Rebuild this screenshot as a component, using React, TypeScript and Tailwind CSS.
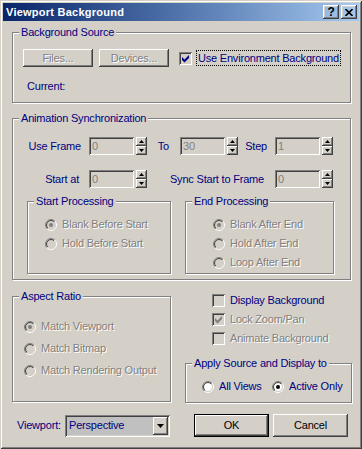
import type { ReactNode } from "react";

const raised =
  "shadow-[inset_-1px_-1px_0_#404040,inset_1px_1px_0_#fff,inset_-2px_-2px_0_#808080,inset_2px_2px_0_#d4d0c8]";
const sunken =
  "shadow-[inset_1px_1px_0_#808080,inset_-1px_-1px_0_#fff,inset_2px_2px_0_#404040,inset_-2px_-2px_0_#d4d0c8]";
const etched = "border border-[#808080] shadow-[inset_1px_1px_0_#fff,1px_1px_0_#fff]";
const grey = "text-[#808080] [text-shadow:1px_1px_0_#fff]";
const navy = "text-[#000080]";

const Group = ({ title, className, children }: { title: string; className: string; children?: ReactNode }) => (
  <div className={`relative ${etched} ${className}`}>
    <span className={`absolute top-[-7px] left-[6px] px-[2px] bg-[#d4d0c8] whitespace-nowrap ${navy}`}>{title}</span>
    {children}
  </div>
);

const RadioDot = ({ on, disabled }: { on?: boolean; disabled?: boolean }) => (
  <svg width="12" height="12" viewBox="0 0 12 12" className="shrink-0">
    <defs>
      <linearGradient id="rgOut" x1="0" y1="0" x2="1" y2="1">
        <stop offset="0.5" stopColor="#808080" />
        <stop offset="0.5" stopColor="#ffffff" />
      </linearGradient>
      <linearGradient id="rgIn" x1="0" y1="0" x2="1" y2="1">
        <stop offset="0.5" stopColor="#404040" />
        <stop offset="0.5" stopColor="#d4d0c8" />
      </linearGradient>
    </defs>
    <circle cx="6" cy="6" r="4" fill={disabled ? "#d4d0c8" : "#ffffff"} />
    <circle cx="6" cy="6" r="5.5" fill="none" stroke="url(#rgOut)" strokeWidth="1" />
    <circle cx="6" cy="6" r="4.5" fill="none" stroke="url(#rgIn)" strokeWidth="1" />
    {on && <circle cx="6" cy="6" r="2" fill={disabled ? "#808080" : "#000000"} />}
  </svg>
);

const Radio = ({ label, on, disabled }: { label: string; on?: boolean; disabled?: boolean }) => (
  <div className="flex items-center h-[13px]">
    <RadioDot on={on} disabled={disabled} />
    <span className={`ml-[5px] whitespace-nowrap ${disabled ? grey : navy}`}>{label}</span>
  </div>
);

const CheckBox = ({ on, disabled }: { on?: boolean; disabled?: boolean }) => (
  <div className={`w-[13px] h-[13px] shrink-0 bg-[#d4d0c8] ${sunken}`}>
    {on && (
      <svg width="13" height="13" viewBox="0 0 13 13">
        <path d="M3 5 L5.5 7.5 L10 3 L10 6 L5.5 10.5 L3 8 Z" fill={disabled ? "#808080" : "#000080"} />
      </svg>
    )}
  </div>
);

const Spinner = ({ value }: { value: string }) => (
  <div className="flex items-center">
    <div className={`w-[45px] h-[18px] pl-[3px] leading-[18px] text-[#808080] ${sunken}`}>{value}</div>
    <div className="ml-[2px] flex flex-col w-[11px] h-[18px]">
      <div className={`h-[9px] flex items-center justify-center bg-[#d4d0c8] ${raised}`}>
        <svg width="5" height="3" viewBox="0 0 5 3">
          <path d="M0 3 L2.5 0 L5 3 Z" fill="#000" />
        </svg>
      </div>
      <div className={`h-[9px] flex items-center justify-center bg-[#d4d0c8] ${raised}`}>
        <svg width="5" height="3" viewBox="0 0 5 3">
          <path d="M0 0 L5 0 L2.5 3 Z" fill="#000" />
        </svg>
      </div>
    </div>
  </div>
);

const Button = ({ label, disabled, main, className }: { label: string; disabled?: boolean; main?: boolean; className: string }) => (
  <div className={`flex items-center justify-center ${main ? "border border-black" : ""} ${className}`}>
    <div className={`w-full h-full flex items-center justify-center ${raised} ${disabled ? grey : "text-black"}`}>
      {label}
    </div>
  </div>
);

export default function App() {
  return (
    <div
      className={`w-[362px] h-[449px] bg-[#d4d0c8] p-[3px] font-['Liberation_Sans',Arial,sans-serif] text-[11px] leading-[13px] tracking-[-0.2px] shadow-[inset_1px_1px_0_#d4d0c8,inset_-1px_-1px_0_#404040,inset_2px_2px_0_#fff,inset_-2px_-2px_0_#808080]`}
    >
      {/* title bar */}
      <div className="h-[18px] flex items-center pl-[3px] pr-[2px] bg-gradient-to-r from-[#0a246a] to-[#a6caf0]">
        <span className="text-white font-bold tracking-[0.25px]">Viewport Background</span>
        <div className={`ml-auto w-[16px] h-[14px] flex items-center justify-center font-bold text-black text-[12px] ${raised}`}>
          ?
        </div>
        <div className={`ml-[2px] w-[16px] h-[14px] flex items-center justify-center ${raised}`}>
          <svg width="8" height="7" viewBox="0 0 8 7">
            <path d="M0.5 0 L7.5 7 M7.5 0 L0.5 7" stroke="#000" strokeWidth="1.6" />
          </svg>
        </div>
      </div>

      <div className="ml-[9px] flex flex-col">
        <Group title="Background Source" className="mt-[11px] w-[339px] h-[71px]">
          <div className="flex items-center pt-[16px] pl-[10px]">
            <Button label="Files..." disabled className="w-[70px] h-[18px]" />
            <Button label="Devices..." disabled className="ml-[6px] w-[70px] h-[18px]" />
            <div className="ml-[10px]">
              <CheckBox on />
            </div>
            <span className={`ml-[4px] h-[16px] px-[1px] leading-[14px] border border-dotted border-black whitespace-nowrap ${navy}`}>
              Use Environment Background
            </span>
          </div>
          <div className={`mt-[13px] ml-[14px] ${navy}`}>Current:</div>
        </Group>

        <Group title="Animation Synchronization" className="mt-[15px] w-[339px] h-[162px]">
          <div className="flex items-center pt-[18px] h-[36px]">
            <span className={`w-[68px] text-right ${navy}`}>Use Frame</span>
            <div className="ml-[8px]">
              <Spinner value="0" />
            </div>
            <span className={`w-[22px] text-right ${navy}`}>To</span>
            <div className="ml-[11px]">
              <Spinner value="30" />
            </div>
            <span className={`w-[29px] text-right ${navy}`}>Step</span>
            <div className="ml-[8px]">
              <Spinner value="1" />
            </div>
          </div>
          <div className="flex items-center mt-[15px] h-[18px]">
            <span className={`w-[66px] text-right ${navy}`}>Start at</span>
            <div className="ml-[10px]">
              <Spinner value="0" />
            </div>
            <span className={`w-[117px] text-right whitespace-nowrap ${navy}`}>Sync Start to Frame</span>
            <div className="ml-[11px]">
              <Spinner value="0" />
            </div>
          </div>
          <div className="flex mt-[13px] ml-[14px]">
            <Group title="Start Processing" className="w-[144px] h-[73px]">
              <div className="flex flex-col gap-[6px] pt-[16px] pl-[17px]">
                <Radio label="Blank Before Start" on disabled />
                <Radio label="Hold Before Start" disabled />
              </div>
            </Group>
            <Group title="End Processing" className="ml-[14px] w-[149px] h-[73px]">
              <div className="flex flex-col gap-[6px] pt-[16px] pl-[27px]">
                <Radio label="Blank After End" on disabled />
                <Radio label="Hold After End" disabled />
                <Radio label="Loop After End" disabled />
              </div>
            </Group>
          </div>
        </Group>

        <div className="flex mt-[14px]">
          <Group title="Aspect Ratio" className="mt-[2px] w-[159px] h-[106px]">
            <div className="flex flex-col gap-[9px] pt-[23px] pl-[11px]">
              <Radio label="Match Viewport" on disabled />
              <Radio label="Match Bitmap" disabled />
              <Radio label="Match Rendering Output" disabled />
            </div>
          </Group>
          <div className="ml-[14px] flex flex-col">
            <div className="flex flex-col gap-[6px] pl-[27px]">
              <div className="flex items-center h-[13px]">
                <CheckBox />
                <span className={`ml-[5px] ${navy}`}>Display Background</span>
              </div>
              <div className="flex items-center h-[13px]">
                <CheckBox on disabled />
                <span className={`ml-[5px] ${grey}`}>Lock Zoom/Pan</span>
              </div>
              <div className="flex items-center h-[13px]">
                <CheckBox />
                <span className={`ml-[5px] ${grey}`}>Animate Background</span>
              </div>
            </div>
            <Group title="Apply Source and Display to" className="mt-[18px] w-[167px] h-[40px]">
              <div className="flex pt-[16px] pl-[16px]">
                <div className="w-[70px]">
                  <Radio label="All Views" />
                </div>
                <Radio label="Active Only" on />
              </div>
            </Group>
          </div>
        </div>

        <div className="flex items-center mt-[11px]">
          <span className={`ml-[5px] w-[48px] ${navy}`}>Viewport:</span>
          <div className={`w-[105px] h-[22px] flex items-center pl-[4px] pr-[2px] bg-[#c0c0c0] ${sunken}`}>
            <span className={navy}>Perspective</span>
            <div className={`ml-auto w-[15px] h-[18px] flex items-center justify-center bg-[#d4d0c8] ${raised}`}>
              <svg width="7" height="4" viewBox="0 0 7 4">
                <path d="M0 0 L7 0 L3.5 4 Z" fill="#000" />
              </svg>
            </div>
          </div>
          <Button label="OK" main className="ml-[24px] w-[75px] h-[23px]" />
          <Button label="Cancel" className="ml-[4px] w-[75px] h-[23px]" />
        </div>
      </div>
    </div>
  );
}
